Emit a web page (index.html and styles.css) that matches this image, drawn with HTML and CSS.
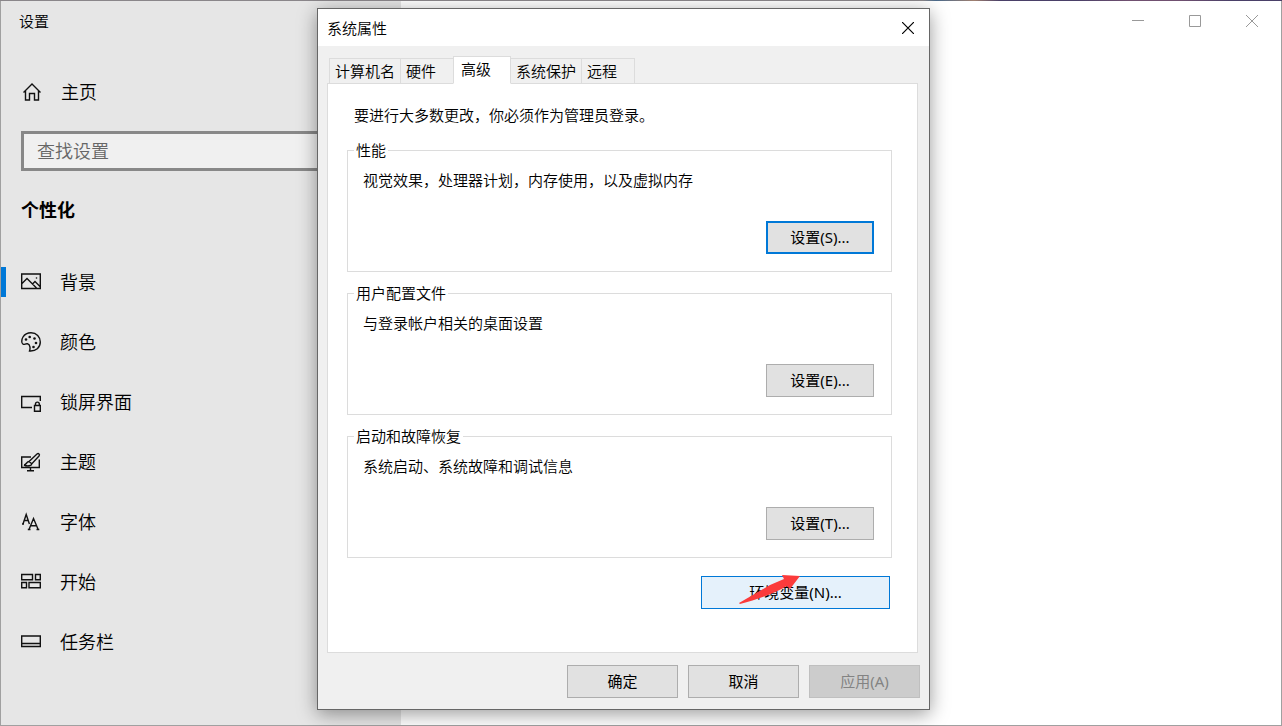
FILE: index.html
```html
<!DOCTYPE html>
<html lang="zh-CN">
<head>
  <meta charset="UTF-8">
  <meta name="viewport" content="width=device-width, initial-scale=1.0">
  <title>设置</title>
  <link rel="stylesheet" href="styles.css">
</head>
<body>

  <div class="wallpaper"></div>

  <div class="settings">
    <aside class="sidebar">
      <div class="app-title">设置</div>

      <a class="home" href="#">
        <svg width="20" height="20" viewBox="0 0 20 20"><path d="M1.5 10.5 L10 2 L18.500 10.500 M3.500 9 V18 H7.500 V11.500 H12.500 V18 H16.500 V9"/></svg>
        <span>主页</span>
      </a>

      <input class="search" type="text" placeholder="查找设置" aria-label="查找设置">

      <h2 class="section">个性化</h2>

      <nav class="menu">
        <a class="item active" href="#">
          <svg width="20" height="20" viewBox="0 0 20 20"><path d="M.7 2 H19.300 V16.500 H.7 Z M1 11.500 L6 6.500 L15.500 16 M11.500 12 L14 9.500 L19 14.500"/><circle class="dot" cx="15.500" cy="6" r=".8"/></svg>
          <span>背景</span>
        </a>
        <a class="item" href="#">
          <svg width="20" height="20" viewBox="0 0 20 20"><path d="M8.500 19 C9.300 17 9.500 12.500 6.500 11.800 C4.500 11.300 3.500 13 2 12.200 C.2 11.200 .5 7.500 2 5 C4 1.700 7 .7 10 .7 C15.500 .7 19.300 4.800 19.300 10 C19.300 15.500 15 19.500 8.500 19 Z"/><circle class="dot" cx="5" cy="7.500" r="1.300"/><circle class="dot" cx="8.700" cy="5" r="1.300"/><circle class="dot" cx="13.500" cy="6.500" r="1.300"/><circle class="dot" cx="15" cy="11" r="1.300"/><circle class="dot" cx="12.500" cy="15" r="1.300"/></svg>
          <span>颜色</span>
        </a>
        <a class="item" href="#">
          <svg width="20" height="20" viewBox="0 0 20 20"><path d="M11 15.500 H.7 V4.500 H19.300 V9 M13.500 13.500 H19.300 V19.300 H13.500 Z M14.500 13.500 V12 C14.500 9.500 18.300 9.500 18.300 12 V13.500"/></svg>
          <span>锁屏界面</span>
        </a>
        <a class="item" href="#">
          <svg width="20" height="20" viewBox="0 0 20 20"><path d="M10 5 H.7 V15.500 H18.300 V7.500 M9.500 15.500 V18.500 M6 18.700 H13 M3 13 C5.500 12.800 5.500 9.500 8 9.500 L16 2 C17.500 .8 19.200 2.300 18 4 L10.800 11.800 C10.500 14 6 14.500 3 13 M8 9.500 L10.800 11.800"/></svg>
          <span>主题</span>
        </a>
        <a class="item" href="#">
          <svg width="20" height="20" viewBox="0 0 20 20"><path d="M2 12 L5.200 2.500 L8.400 12 M3.200 8.500 H7.300 M1 12 H3 M8 17.500 L12.500 6.500 L17.200 17.500 M9.500 13.800 H15.500 M6.800 17.500 H9.500 M15.500 17.500 H18.300"/></svg>
          <span>字体</span>
        </a>
        <a class="item" href="#">
          <svg width="20" height="20" viewBox="0 0 20 20"><path d="M.7 2.500 H11.500 V7.800 H.7 Z M14.500 2.500 H19.300 V7.800 H14.500 Z M.7 10.500 H5.500 V15.800 H.7 Z M8 10.500 H19.300 V15.800 H8 Z"/></svg>
          <span>开始</span>
        </a>
        <a class="item" href="#">
          <svg width="20" height="20" viewBox="0 0 20 20"><path d="M.7 4 H19.300 V14.500 H.7 Z M.7 11.500 H19.300"/></svg>
          <span>任务栏</span>
        </a>
      </nav>
    </aside>

    <main class="content">
      <div class="window-controls">
        <button type="button" aria-label="最小化"><svg width="12" height="12" viewBox="0 0 12 12"><path d="M0 5.500 H12"/></svg></button>
        <button type="button" aria-label="最大化"><svg width="12" height="12" viewBox="0 0 12 12"><path d="M.5 .5 H11.500 V11.500 H.5 Z"/></svg></button>
        <button type="button" aria-label="关闭"><svg width="12" height="12" viewBox="0 0 12 12"><path d="M0 0 L12 12 M12 0 L0 12"/></svg></button>
      </div>
    </main>
  </div>

  <div class="dialog" role="dialog" aria-labelledby="dialogTitle">
    <div class="titlebar">
      <span id="dialogTitle">系统属性</span>
      <button class="close" type="button" aria-label="关闭"><svg width="12" height="12" viewBox="0 0 12 12"><path d="M0 0 L12 12 M12 0 L0 12"/></svg></button>
    </div>

    <div class="tabs" role="tablist">
      <button class="tab" type="button" role="tab">计算机名</button>
      <button class="tab" type="button" role="tab">硬件</button>
      <button class="tab selected" type="button" role="tab" aria-selected="true">高级</button>
      <button class="tab" type="button" role="tab">系统保护</button>
      <button class="tab" type="button" role="tab">远程</button>
    </div>

    <div class="page" role="tabpanel">
      <p class="intro">要进行大多数更改，你必须作为管理员登录。</p>

      <fieldset class="group">
        <legend>性能</legend>
        <p>视觉效果，处理器计划，内存使用，以及虚拟内存</p>
        <button class="btn default" type="button">设置(S)...</button>
      </fieldset>

      <fieldset class="group">
        <legend>用户配置文件</legend>
        <p>与登录帐户相关的桌面设置</p>
        <button class="btn" type="button">设置(E)...</button>
      </fieldset>

      <fieldset class="group">
        <legend>启动和故障恢复</legend>
        <p>系统启动、系统故障和调试信息</p>
        <button class="btn" type="button">设置(T)...</button>
      </fieldset>

      <div class="env">
        <button class="btn hot" type="button">环境变量(N)...</button>
        <svg class="arrow" width="62" height="30" viewBox="0 0 62 30"><path d="M0 28 L31 10 L45 4 L43 0 L61 1 L51 14 L48 11 C36 18 20 24 1 29 Z"/></svg>
      </div>
    </div>

    <div class="footer">
      <button class="btn" type="button">确定</button>
      <button class="btn" type="button">取消</button>
      <button class="btn" type="button" disabled>应用(A)</button>
    </div>
  </div>

</body>
</html>
```
FILE: styles.css
```css
* {
  box-sizing: border-box;
}

body {
  margin: 0;
  min-height: 100vh;
  display: flex;
  flex-direction: column;
  position: relative;
  font-family: "Noto Sans", "Noto Sans CJK SC", sans-serif;
  font-size: 15px;
  font-weight: 350;
  line-height: 20px;
  color: #000;
  background: #fff;
}

button,
input {
  font: inherit;
  color: inherit;
}

svg {
  display: block;
  flex: none;
  fill: none;
  stroke: #111;
}

.wallpaper {
  height: 1px;
  background: linear-gradient(90deg, #8a868a 72%, #4a6a8c 73%, #a08070 76%, #4a4068 78%, #4a4068 84%, #705070 88%, #705070 92%, #4a4068 96%);
}

/* settings window */
.settings {
  flex: 1;
  display: flex;
  border: 1px solid #a0a0a0;
  border-top: none;
}

.sidebar {
  width: 400px;
  flex: none;
  background: #e6e6e6;
}

.app-title {
  padding: 10px 18px;
}

.home,
.item {
  display: flex;
  align-items: center;
  height: 60px;
  font-size: 18px;
  line-height: 24px;
  color: #000;
  text-decoration: none;
}

.home {
  margin-top: 21px;
  padding-left: 21px;
  gap: 19px;
}

.home svg,
.item svg {
  stroke-width: 1.4;
}

.search {
  display: block;
  width: 360px;
  height: 40px;
  margin: 9px 20px 0;
  padding: 0 13px;
  font-size: 18px;
  border: 3px solid #888;
  border-radius: 0;
  background: #f0f0f0;
}

.search::placeholder {
  color: #666;
  opacity: 1;
}

.section {
  margin: 24px 20px 27px;
  font-size: 18px;
  line-height: 30px;
}

.item::before {
  content: "";
  width: 5px;
  height: 30px;
  margin-right: 15px;
}

.item.active::before {
  background: #0078d7;
}

.item svg {
  margin-right: 19px;
}

.item .dot {
  fill: #111;
  stroke: none;
}

.content {
  flex: 1;
  background: #fff;
}

.window-controls {
  display: flex;
  justify-content: flex-end;
  padding-right: 1px;
}

.window-controls button {
  width: 57px;
  height: 40px;
  padding: 0;
  display: flex;
  align-items: center;
  justify-content: center;
  border: none;
  background: none;
}

.window-controls svg {
  stroke: #999;
}

/* system properties dialog, floats over the settings window */
.dialog {
  position: absolute;
  left: 317px;
  top: 8px;
  width: 613px;
  border: 1px solid #666;
  background: #f0f0f0;
  box-shadow: 0 4px 18px rgba(0, 0, 0, 0.4);
}

.titlebar {
  display: flex;
  align-items: center;
  justify-content: space-between;
  height: 37px;
  padding-left: 9px;
  background: #fff;
}

.close {
  width: 43px;
  height: 37px;
  padding: 0;
  display: flex;
  align-items: center;
  justify-content: center;
  border: none;
  background: none;
}

.close svg {
  stroke: #000;
  stroke-width: 1.2;
}

.tabs {
  display: flex;
  align-items: flex-end;
  padding: 10px 12px 0;
  margin-bottom: -1px;
}

.tab {
  min-width: 54px;
  height: 26px;
  margin-left: -1px;
  padding: 0 5px;
  text-align: left;
  border: 1px solid #dcdcdc;
  background: #f0f0f0;
}

.tab.selected {
  z-index: 1;
  min-width: 58px;
  height: 28px;
  padding: 0 7px 3px;
  border-bottom-color: #fff;
  background: #fff;
}

.page {
  margin: 0 11px 0 9px;
  padding: 21px 25px 43px 19px;
  border: 1px solid #dcdcdc;
  background: #fff;
}

.intro {
  margin: 0 0 15px 7px;
}

.group {
  margin: 0 0 11px;
  padding: 10px 17px 17px 6px;
  border: 1px solid #dcdcdc;
}

.group legend {
  padding: 0 2px;
}

.group p {
  margin: 0 0 31px 9px;
}

.btn {
  display: block;
  height: 33px;
  padding: 0 0 2px;
  font-weight: 400;
  border: 1px solid #adadad;
  background: #e1e1e1;
}

.group .btn {
  width: 108px;
  margin-left: auto;
}

.btn.default {
  border: 2px solid #0078d7;
}

.env {
  position: relative;
  width: 189px;
  margin: 18px 2px 0 auto;
}

.btn.hot {
  width: 100%;
  border-color: #0078d7;
  background: #e5f1fb;
}

.arrow {
  position: absolute;
  left: 38px;
  top: -1px;
}

.arrow path {
  fill: #fb3b3b;
  stroke: none;
}

.footer {
  display: flex;
  justify-content: flex-end;
  gap: 10px;
  padding: 12px 9px 11px;
}

.footer .btn {
  width: 111px;
}

.btn:disabled {
  color: #838383;
  border-color: #bfbfbf;
  background: #ccc;
}
```
